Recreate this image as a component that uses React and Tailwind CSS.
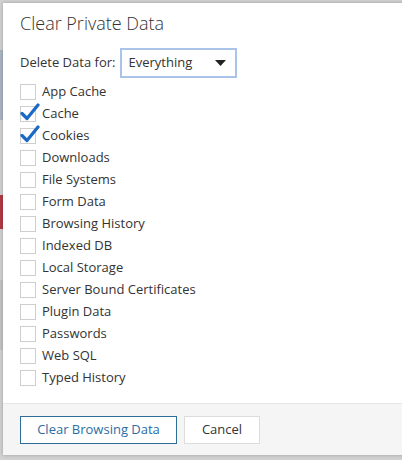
import { useState } from 'react';

const items = [
  { label: 'App Cache', checked: false },
  { label: 'Cache', checked: true },
  { label: 'Cookies', checked: true },
  { label: 'Downloads', checked: false },
  { label: 'File Systems', checked: false },
  { label: 'Form Data', checked: false },
  { label: 'Browsing History', checked: false },
  { label: 'Indexed DB', checked: false },
  { label: 'Local Storage', checked: false },
  { label: 'Server Bound Certificates', checked: false },
  { label: 'Plugin Data', checked: false },
  { label: 'Passwords', checked: false },
  { label: 'Web SQL', checked: false },
  { label: 'Typed History', checked: false },
];

function Check({ label, checked, onToggle }) {
  return (
    <label className="flex items-center h-[22px] cursor-pointer" onClick={onToggle}>
      <span className="relative w-4 h-4 border border-[#cfcfcf] bg-white shrink-0">
        {checked && (
          <svg className="absolute -left-[1px] -top-[5px] w-[20px] h-[20px]" viewBox="0 0 20 20">
            <path d="M2 11.5 L7 16.5 L18 3" fill="none" stroke="#1b69c4" strokeWidth="3.2" strokeLinecap="round" strokeLinejoin="round" />
          </svg>
        )}
      </span>
      <span className="ml-[6px] text-[13px] text-[#333]">{label}</span>
    </label>
  );
}

export default function App() {
  const [state, setState] = useState(items);

  const toggle = (i) =>
    setState((s) => s.map((it, idx) => (idx === i ? { ...it, checked: !it.checked } : it)));

  return (
    <div className="w-[402px] h-[460px] overflow-hidden bg-[#d2d2d2] relative" style={{ fontFamily: '"Open Sans", "Noto Sans", sans-serif' }}>
      {/* page peeking behind the dialog */}
      <div className="absolute left-0 top-[50px] w-[3px] h-[70px] bg-[#aab6c2]" />
      <div className="absolute left-0 top-[195px] w-[3px] h-[34px] bg-[#b23a44]" />
      <div className="absolute left-0 top-[280px] w-[3px] h-[70px] bg-[#c4c4c4]" />

      <div className="absolute left-[3px] top-[3px] w-[420px] h-[452px] bg-white flex flex-col shadow-[0_0_4px_rgba(0,0,0,0.25)]">
        <div className="pl-[17px] pt-[7px] text-[18px] font-light text-[#333] leading-[26px]">Clear Private Data</div>

        <div className="pl-[17px] mt-[12px] flex items-center">
          <span className="text-[13px] text-[#333]">Delete Data for:</span>
          <div className="ml-[5px] w-[117px] h-[30px] border-2 border-[#a9c4e8] flex items-center justify-between pl-[6px] pr-[9px]">
            <span className="text-[13px] text-[#333]">Everything</span>
            <svg width="11" height="6" viewBox="0 0 11 6">
              <path d="M0 0 H11 L5.5 6 Z" fill="#222" />
            </svg>
          </div>
        </div>

        <div className="pl-[17px] mt-[3px] flex flex-col">
          {state.map((it, i) => (
            <Check key={it.label} label={it.label} checked={it.checked} onToggle={() => toggle(i)} />
          ))}
        </div>

        <div className="mt-auto h-[52px] border-t border-[#e6e6e6] bg-[#f5f5f5] flex items-center pl-[17px] gap-[7px]">
          <button className="h-[28px] w-[157px] border border-[#2f6e99] bg-white text-[13px] text-[#2a6da6]">
            Clear Browsing Data
          </button>
          <button className="h-[28px] w-[76px] border border-[#dcdcdc] bg-white text-[13px] text-[#333]">
            Cancel
          </button>
        </div>
      </div>
    </div>
  );
}
